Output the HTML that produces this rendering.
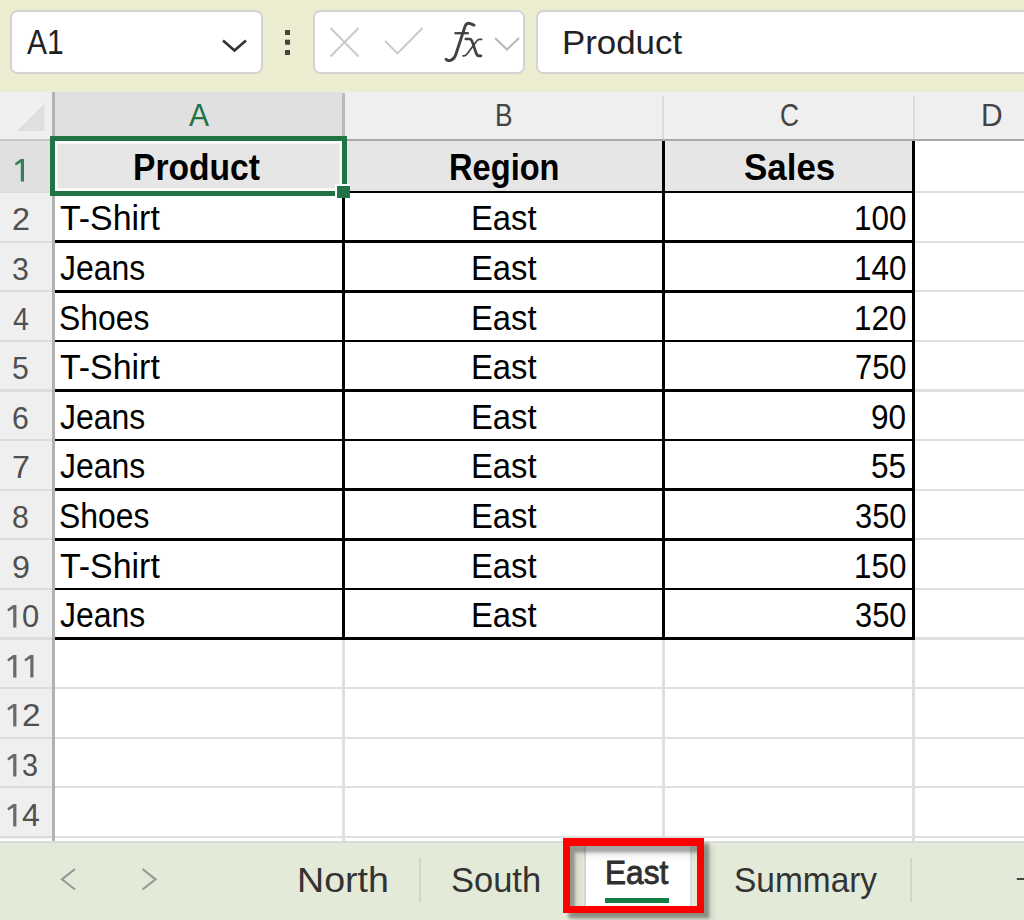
<!DOCTYPE html>
<html>
<head>
<meta charset="utf-8">
<title>Excel - East</title>
<style>
html,body{margin:0;padding:0;}
body{width:1024px;height:920px;overflow:hidden;background:#fff;position:relative;font-family:"Liberation Sans",sans-serif;}
.a{position:absolute;}
.t{position:absolute;white-space:nowrap;transform-origin:0 50%;display:block;}
.box{position:absolute;background:#fff;border:2px solid #d3d3d3;border-radius:7.5px;box-sizing:border-box;}
.hl{position:absolute;height:2.2px;}
.vl{position:absolute;width:2.3px;}
.hb{position:absolute;height:2.6px;background:#000;}
.vb{position:absolute;width:2.7px;background:#000;}
.gr{background:#dfdfdf;}
</style>
</head>
<body>
<!-- formula bar -->
<div class="a" style="left:0;top:0;width:1024px;height:91.5px;background:#ebecd0;"></div>
<div class="box" style="left:10px;top:10px;width:252.5px;height:64px;"></div>
<div class="box" style="left:312.5px;top:10px;width:212.5px;height:64px;"></div>
<div class="box" style="left:535.5px;top:10px;width:520px;height:64px;"></div>
<svg class="a" style="left:0;top:0;" width="1024" height="92" viewBox="0 0 1024 92">
  <path d="M223 40.5 L234.5 50.5 L246 40.5" fill="none" stroke="#333" stroke-width="2.6"/>
  <rect x="285" y="30" width="5" height="5" fill="#444"/>
  <rect x="285" y="39.7" width="5" height="5" fill="#444"/>
  <rect x="285" y="50" width="5" height="5" fill="#444"/>
  <path d="M330.5 28 L358.5 56.5 M358.5 28 L330.5 56.5" fill="none" stroke="#c9c9c9" stroke-width="1.9"/>
  <path d="M385 41 L397.5 53.5 L422.5 28" fill="none" stroke="#c9c9c9" stroke-width="1.9"/>
  <path d="M495 38 L507 49.5 L519 38" fill="none" stroke="#b9b9b9" stroke-width="2.1"/>
  <g fill="none" stroke="#424242" stroke-linecap="round" stroke-linejoin="round">
    <path d="M474 25.2 L470.2 23.6 C467.6 22.6 465.8 24 464.8 27 L455.8 54.5 C453.8 60.6 448.6 62 446 59.2" stroke-width="2.9"/>
    <path d="M454.5 33.2 L468.8 33.2" stroke-width="2.3" stroke-linecap="butt"/>
    <path d="M465.8 39 L469.6 39 C471 39 471.6 40 472.2 41.6 L476.2 53.2 C476.8 55 477.6 55.8 479 55.8 L481 55.8" stroke-width="2.7"/>
    <path d="M481.6 39.4 L479.6 39.4 C478.4 39.4 477.6 40 476.6 41.2 L467.2 53.8 C466.2 55.2 465.4 55.8 464.2 55.8 L463 55.8" stroke-width="1.7"/>
  </g>
</svg>
<!-- column headers -->
<div class="a" style="left:0;top:91.5px;width:1024px;height:49px;background:#efefef;"></div>
<div class="a" style="left:54px;top:91.5px;width:288.5px;height:48px;background:#e0e0e0;"></div>
<svg class="a" style="left:0;top:92px;" width="54" height="48" viewBox="0 0 54 48"><path d="M44.5 11.5 L44.5 39 L17 39 Z" fill="#dfdfdf"/></svg>
<!-- row headers -->
<div class="a" style="left:0;top:140px;width:52px;height:699px;background:#efefef;"></div>
<div class="a" style="left:0;top:140px;width:52px;height:52.14px;background:#e0e0e0;"></div>
<div class="a" style="left:54.5px;top:141px;width:858px;height:51.14px;background:#e6e6e6;"></div>
<!-- grid -->
<div class="a" style="left:0;top:139.2px;width:52px;height:2px;background:#c6c6c6;"></div>
<div class="hl" style="left:0;top:191.04px;width:52px;background:#dcdcdc;"></div>
<div class="hl" style="left:0;top:240.63px;width:52px;background:#dcdcdc;"></div>
<div class="hl" style="left:0;top:290.22px;width:52px;background:#dcdcdc;"></div>
<div class="hl" style="left:0;top:339.81px;width:52px;background:#dcdcdc;"></div>
<div class="hl" style="left:0;top:389.40px;width:52px;background:#dcdcdc;"></div>
<div class="hl" style="left:0;top:438.99px;width:52px;background:#dcdcdc;"></div>
<div class="hl" style="left:0;top:488.58px;width:52px;background:#dcdcdc;"></div>
<div class="hl" style="left:0;top:538.17px;width:52px;background:#dcdcdc;"></div>
<div class="hl" style="left:0;top:587.76px;width:52px;background:#dcdcdc;"></div>
<div class="hl" style="left:0;top:637.35px;width:52px;background:#dcdcdc;"></div>
<div class="hl" style="left:0;top:686.94px;width:52px;background:#dcdcdc;"></div>
<div class="hl" style="left:0;top:736.53px;width:52px;background:#dcdcdc;"></div>
<div class="hl" style="left:0;top:786.12px;width:52px;background:#dcdcdc;"></div>
<div class="hl" style="left:0;top:835.71px;width:52px;background:#dcdcdc;"></div>
<div class="hl gr" style="left:915px;top:191.04px;width:109px;"></div>
<div class="hl gr" style="left:915px;top:240.63px;width:109px;"></div>
<div class="hl gr" style="left:915px;top:290.22px;width:109px;"></div>
<div class="hl gr" style="left:915px;top:339.81px;width:109px;"></div>
<div class="hl gr" style="left:915px;top:389.40px;width:109px;"></div>
<div class="hl gr" style="left:915px;top:438.99px;width:109px;"></div>
<div class="hl gr" style="left:915px;top:488.58px;width:109px;"></div>
<div class="hl gr" style="left:915px;top:538.17px;width:109px;"></div>
<div class="hl gr" style="left:915px;top:587.76px;width:109px;"></div>
<div class="hl gr" style="left:915px;top:637.35px;width:109px;"></div>
<div class="hl gr" style="left:54.5px;top:686.94px;width:970px;"></div>
<div class="hl gr" style="left:54.5px;top:736.53px;width:970px;"></div>
<div class="hl gr" style="left:54.5px;top:786.12px;width:970px;"></div>
<div class="hl gr" style="left:54.5px;top:835.71px;width:970px;"></div>
<div class="vl gr" style="left:342.3px;top:638.45px;height:203.05px;"></div>
<div class="vl gr" style="left:662.3px;top:638.45px;height:203.05px;"></div>
<div class="vl gr" style="left:912.4px;top:638.45px;height:203.05px;"></div>
<div class="hb" style="left:54.5px;top:190.84px;width:860.5px;"></div>
<div class="hb" style="left:54.5px;top:240.43px;width:860.5px;"></div>
<div class="hb" style="left:54.5px;top:290.02px;width:860.5px;"></div>
<div class="hb" style="left:54.5px;top:339.61px;width:860.5px;"></div>
<div class="hb" style="left:54.5px;top:389.20px;width:860.5px;"></div>
<div class="hb" style="left:54.5px;top:438.79px;width:860.5px;"></div>
<div class="hb" style="left:54.5px;top:488.38px;width:860.5px;"></div>
<div class="hb" style="left:54.5px;top:537.97px;width:860.5px;"></div>
<div class="hb" style="left:54.5px;top:587.56px;width:860.5px;"></div>
<div class="hb" style="left:54.5px;top:637.15px;width:860.5px;"></div>
<div class="vb" style="left:342.1px;top:141px;height:498.75px;"></div>
<div class="vb" style="left:662.1px;top:141px;height:498.75px;"></div>
<div class="vb" style="left:912.2px;top:141px;height:498.75px;"></div>
<div class="a" style="left:54.5px;top:139px;width:970px;height:2px;background:#a9a9a9;"></div>
<div class="a" style="left:52px;top:92px;width:2.5px;height:749px;background:#b2b2b2;"></div>
<div class="a" style="left:342px;top:93px;width:2.5px;height:46px;background:#bbb;"></div>
<div class="a" style="left:662.3px;top:96px;width:2px;height:43px;background:#dcdcdc;"></div>
<div class="a" style="left:912.5px;top:96px;width:2px;height:43px;background:#dcdcdc;"></div>
<!-- selection -->
<div class="a" style="left:50px;top:136.25px;width:297px;height:59.75px;box-sizing:border-box;border:5px solid #217346;box-shadow:inset 0 0 0 2.5px #fff;"></div>
<div class="a" style="left:335px;top:183.75px;width:14.6px;height:14.25px;background:#fff;"></div>
<div class="a" style="left:337.2px;top:186px;width:12.4px;height:12px;background:#217346;"></div>
<!-- sheet tabs -->
<div class="a" style="left:0;top:841px;width:1024px;height:80px;background:#e4ead8;border-top:2.2px solid #dadada;box-sizing:border-box;"></div>
<svg class="a" style="left:0;top:841px;" width="1024" height="79" viewBox="0 841 1024 79">
  <path d="M75 869 L62 879.3 L75 889.5" fill="none" stroke="#999" stroke-width="2.2"/>
  <path d="M142.5 869 L155.5 879.3 L142.5 889.5" fill="none" stroke="#999" stroke-width="2.2"/>
  <rect x="419" y="858" width="1.8" height="44" fill="#cfd2c8"/>
  <rect x="910.3" y="858" width="1.8" height="44" fill="#cfd2c8"/>
  <rect x="1016.8" y="878" width="8" height="2" fill="#444"/>
</svg>
<div class="a" style="left:583.5px;top:845px;width:108px;height:61px;background:#fff;border-left:2px solid #d6d6d6;border-right:2.5px solid #dedede;box-sizing:border-box;"></div>
<div class="a" style="left:605px;top:898px;width:64.3px;height:4.5px;background:#137e43;"></div>
<div class="a" style="left:563px;top:838.1px;width:141px;height:74.5px;box-sizing:border-box;border:solid #f00;border-width:8px 7.2px 7.6px 7.3px;box-shadow:4.5px 4.5px 2.5px rgba(0,0,0,.30), 8px 8px 5px rgba(0,0,0,.12), inset 5px 6.5px 3px rgba(0,0,0,.30), inset 9px 11px 6px rgba(0,0,0,.07);"></div>
<svg class="a" style="left:0;top:0;" width="52" height="920" viewBox="0 0 52 920">
<path fill="#348059" d="M20.8 159.0 L24.0 159.0 L24.0 181.4 L20.8 181.4 L20.8 162.4 L15.9 165.5 L14.9 163.3 Z"/>
<path fill="#6a6a6a" d="M13.2 605.0 L16.4 605.0 L16.4 627.4 L13.2 627.4 L13.2 608.4 L8.3 611.5 L7.3 609.3 Z"/>
<path fill="#6a6a6a" d="M13.2 655.0 L16.4 655.0 L16.4 677.4 L13.2 677.4 L13.2 658.4 L8.3 661.5 L7.3 659.3 Z"/>
<path fill="#6a6a6a" d="M13.2 704.0 L16.4 704.0 L16.4 726.4 L13.2 726.4 L13.2 707.4 L8.3 710.5 L7.3 708.3 Z"/>
<path fill="#6a6a6a" d="M13.2 754.0 L16.4 754.0 L16.4 776.4 L13.2 776.4 L13.2 757.4 L8.3 760.5 L7.3 758.3 Z"/>
<path fill="#6a6a6a" d="M13.2 804.0 L16.4 804.0 L16.4 826.4 L13.2 826.4 L13.2 807.4 L8.3 810.5 L7.3 808.3 Z"/>
<path fill="#6a6a6a" d="M30.3 655.0 L33.5 655.0 L33.5 677.4 L30.3 677.4 L30.3 658.4 L25.4 661.5 L24.4 659.3 Z"/>
</svg>
<!-- text -->
<span class="t" style="left:27.00px;top:25.01px;font-size:34.78px;line-height:34.78px;transform:scaleX(0.8619);color:#222;">A1</span>
<span class="t" style="left:561.73px;top:26.19px;font-size:33.62px;line-height:33.62px;transform:scaleX(1.0368);color:#222;">Product</span>
<span class="t" style="left:188.50px;top:99.50px;font-size:31.59px;line-height:31.59px;transform:scaleX(0.9524);color:#217346;">A</span>
<span class="t" style="left:495.43px;top:99.50px;font-size:31.59px;line-height:31.59px;transform:scaleX(0.8333);color:#444;">B</span>
<span class="t" style="left:780.12px;top:99.50px;font-size:31.59px;line-height:31.59px;transform:scaleX(0.8333);color:#444;">C</span>
<span class="t" style="left:981.40px;top:99.50px;font-size:31.59px;line-height:31.59px;transform:scaleX(0.9500);color:#444;">D</span>
<span class="t" style="left:133.15px;top:150.39px;font-size:36.43px;line-height:36.43px;transform:scaleX(0.9231);color:#000;font-weight:700;">Product</span>
<span class="t" style="left:449.01px;top:150.39px;font-size:36.43px;line-height:36.43px;transform:scaleX(0.8957);color:#000;font-weight:700;">Region</span>
<span class="t" style="left:743.55px;top:150.17px;font-size:36.86px;line-height:36.86px;transform:scaleX(0.9468);color:#000;font-weight:700;">Sales</span>
<span class="t" style="left:59.60px;top:201.08px;font-size:34.64px;line-height:34.64px;transform:scaleX(0.9790);color:#000;">T-Shirt</span>
<span class="t" style="left:471.11px;top:201.08px;font-size:34.64px;line-height:34.64px;transform:scaleX(0.9459);color:#000;">East</span>
<span class="t" style="left:854.17px;top:201.26px;font-size:34.29px;line-height:34.29px;transform:scaleX(0.9166);color:#000;">100</span>
<span class="t" style="left:59.60px;top:251.08px;font-size:34.64px;line-height:34.64px;transform:scaleX(0.9231);color:#000;">Jeans</span>
<span class="t" style="left:471.11px;top:251.08px;font-size:34.64px;line-height:34.64px;transform:scaleX(0.9459);color:#000;">East</span>
<span class="t" style="left:854.17px;top:251.26px;font-size:34.29px;line-height:34.29px;transform:scaleX(0.9166);color:#000;">140</span>
<span class="t" style="left:59.28px;top:301.08px;font-size:34.64px;line-height:34.64px;transform:scaleX(0.9209);color:#000;">Shoes</span>
<span class="t" style="left:471.11px;top:301.08px;font-size:34.64px;line-height:34.64px;transform:scaleX(0.9459);color:#000;">East</span>
<span class="t" style="left:854.17px;top:301.26px;font-size:34.29px;line-height:34.29px;transform:scaleX(0.9166);color:#000;">120</span>
<span class="t" style="left:59.60px;top:350.08px;font-size:34.64px;line-height:34.64px;transform:scaleX(0.9790);color:#000;">T-Shirt</span>
<span class="t" style="left:471.11px;top:350.08px;font-size:34.64px;line-height:34.64px;transform:scaleX(0.9459);color:#000;">East</span>
<span class="t" style="left:855.10px;top:350.26px;font-size:34.29px;line-height:34.29px;transform:scaleX(0.9000);color:#000;">750</span>
<span class="t" style="left:59.60px;top:400.08px;font-size:34.64px;line-height:34.64px;transform:scaleX(0.9231);color:#000;">Jeans</span>
<span class="t" style="left:471.11px;top:400.08px;font-size:34.64px;line-height:34.64px;transform:scaleX(0.9459);color:#000;">East</span>
<span class="t" style="left:871.48px;top:400.26px;font-size:34.29px;line-height:34.29px;transform:scaleX(0.9208);color:#000;">90</span>
<span class="t" style="left:59.60px;top:449.08px;font-size:34.64px;line-height:34.64px;transform:scaleX(0.9231);color:#000;">Jeans</span>
<span class="t" style="left:471.11px;top:449.08px;font-size:34.64px;line-height:34.64px;transform:scaleX(0.9459);color:#000;">East</span>
<span class="t" style="left:871.48px;top:449.26px;font-size:34.29px;line-height:34.29px;transform:scaleX(0.9208);color:#000;">55</span>
<span class="t" style="left:59.28px;top:499.08px;font-size:34.64px;line-height:34.64px;transform:scaleX(0.9209);color:#000;">Shoes</span>
<span class="t" style="left:471.11px;top:499.08px;font-size:34.64px;line-height:34.64px;transform:scaleX(0.9459);color:#000;">East</span>
<span class="t" style="left:855.10px;top:499.26px;font-size:34.29px;line-height:34.29px;transform:scaleX(0.9000);color:#000;">350</span>
<span class="t" style="left:59.60px;top:549.08px;font-size:34.64px;line-height:34.64px;transform:scaleX(0.9790);color:#000;">T-Shirt</span>
<span class="t" style="left:471.11px;top:549.08px;font-size:34.64px;line-height:34.64px;transform:scaleX(0.9459);color:#000;">East</span>
<span class="t" style="left:854.17px;top:549.26px;font-size:34.29px;line-height:34.29px;transform:scaleX(0.9166);color:#000;">150</span>
<span class="t" style="left:59.60px;top:598.08px;font-size:34.64px;line-height:34.64px;transform:scaleX(0.9231);color:#000;">Jeans</span>
<span class="t" style="left:471.11px;top:598.08px;font-size:34.64px;line-height:34.64px;transform:scaleX(0.9459);color:#000;">East</span>
<span class="t" style="left:855.10px;top:598.26px;font-size:34.29px;line-height:34.29px;transform:scaleX(0.9000);color:#000;">350</span>
<span class="t" style="left:12.22px;top:204.26px;font-size:31.29px;line-height:31.29px;transform:scaleX(1.0333);color:#505050;">2</span>
<span class="t" style="left:12.28px;top:254.26px;font-size:31.29px;line-height:31.29px;transform:scaleX(0.9688);color:#505050;">3</span>
<span class="t" style="left:13.25px;top:304.26px;font-size:31.29px;line-height:31.29px;transform:scaleX(0.9118);color:#505050;">4</span>
<span class="t" style="left:12.28px;top:353.26px;font-size:31.29px;line-height:31.29px;transform:scaleX(0.9688);color:#505050;">5</span>
<span class="t" style="left:12.28px;top:403.26px;font-size:31.29px;line-height:31.29px;transform:scaleX(0.9688);color:#505050;">6</span>
<span class="t" style="left:12.22px;top:452.26px;font-size:31.29px;line-height:31.29px;transform:scaleX(1.0333);color:#505050;">7</span>
<span class="t" style="left:12.28px;top:502.26px;font-size:31.29px;line-height:31.29px;transform:scaleX(0.9688);color:#505050;">8</span>
<span class="t" style="left:12.22px;top:552.26px;font-size:31.29px;line-height:31.29px;transform:scaleX(1.0333);color:#505050;">9</span>
<span class="t" style="left:22.01px;top:601.26px;font-size:31.29px;line-height:31.29px;transform:scaleX(0.9875);color:#505050;">0</span>
<span class="t" style="left:21.93px;top:700.26px;font-size:31.29px;line-height:31.29px;transform:scaleX(1.0667);color:#505050;">2</span>
<span class="t" style="left:22.38px;top:750.26px;font-size:31.29px;line-height:31.29px;transform:scaleX(0.9187);color:#505050;">3</span>
<span class="t" style="left:22.00px;top:800.26px;font-size:31.29px;line-height:31.29px;transform:scaleX(1.0235);color:#505050;">4</span>
<span class="t" style="left:296.80px;top:863.40px;font-size:34.20px;line-height:34.20px;transform:scaleX(1.0994);color:#333;">North</span>
<span class="t" style="left:450.99px;top:863.40px;font-size:34.20px;line-height:34.20px;transform:scaleX(1.0078);color:#333;">South</span>
<span class="t" style="left:605.12px;top:856.19px;font-size:33.62px;line-height:33.62px;transform:scaleX(0.9406);color:#303030;-webkit-text-stroke:0.9px #303030;">East</span>
<span class="t" style="left:734.02px;top:863.40px;font-size:34.20px;line-height:34.20px;transform:scaleX(0.9783);color:#333;">Summary</span>
</body>
</html>
